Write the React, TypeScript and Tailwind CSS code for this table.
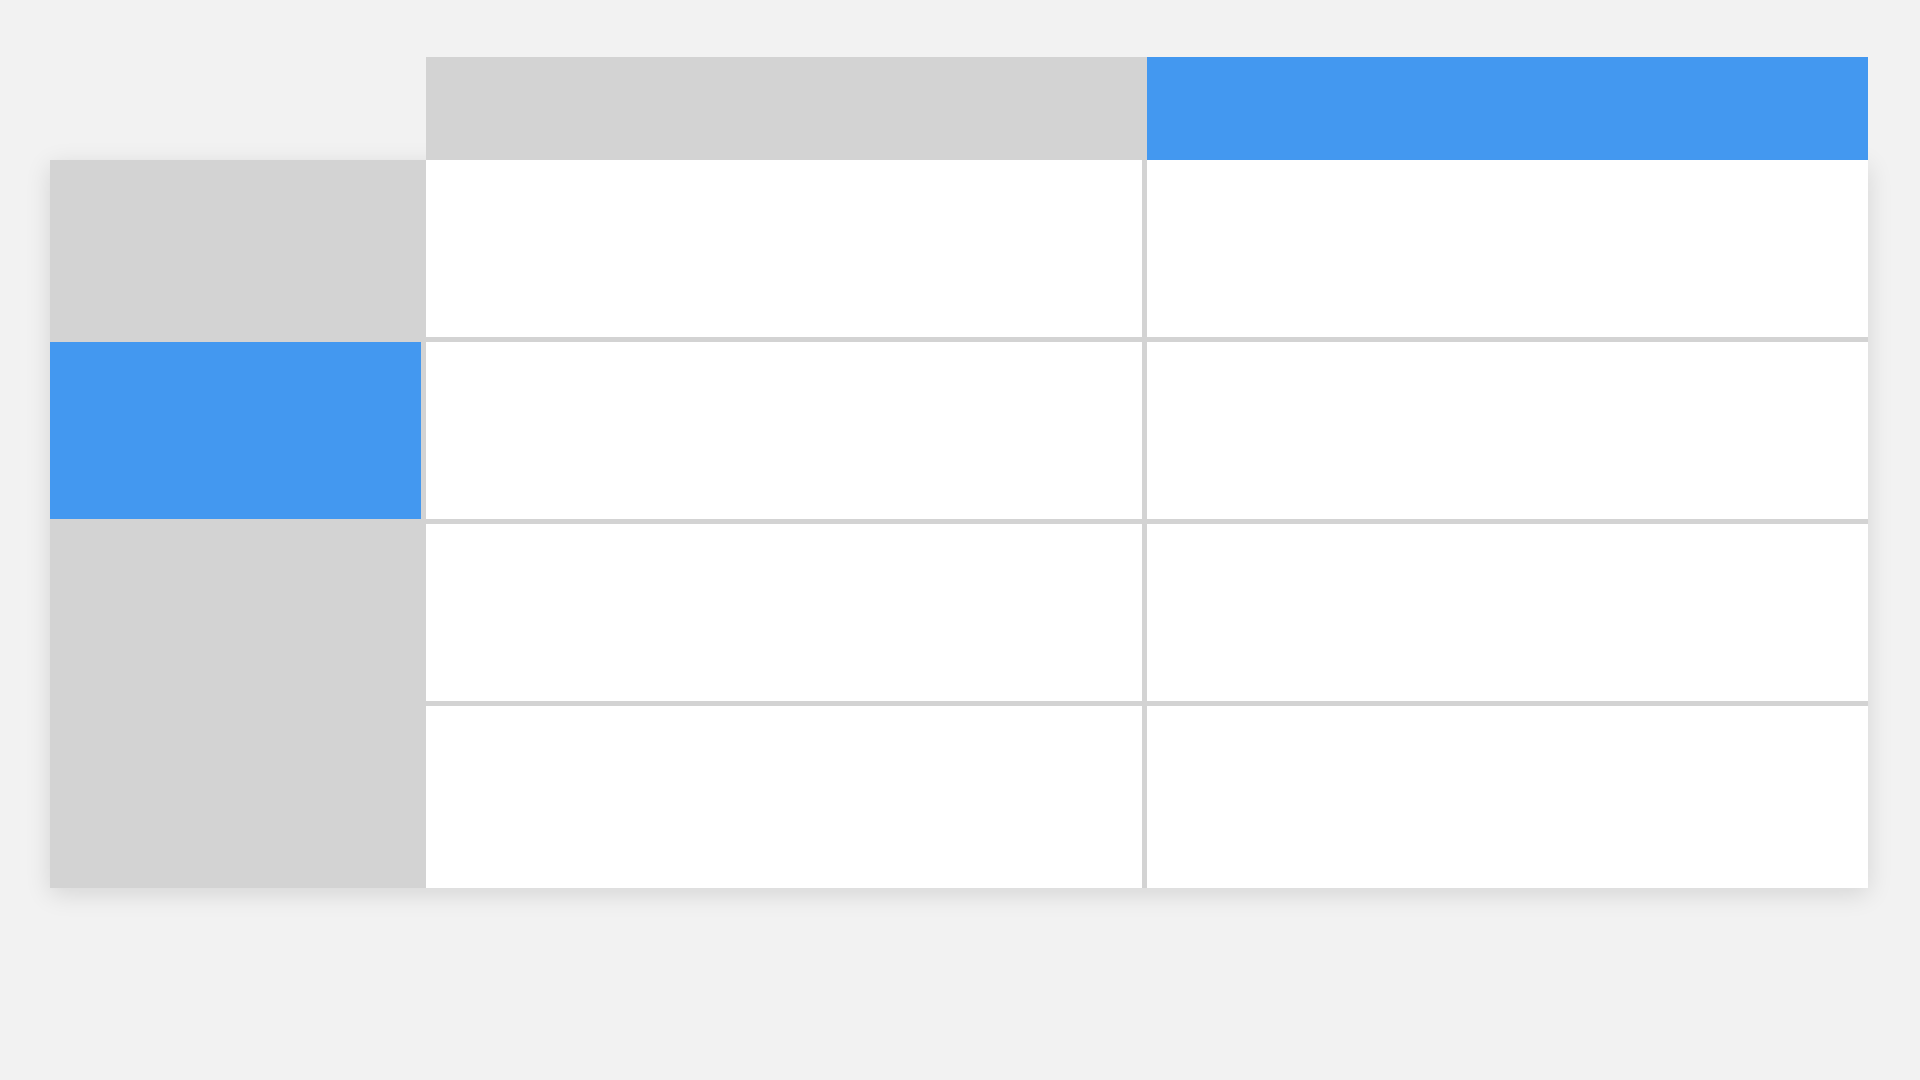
import React from "react";

const rows = [0, 1, 2, 3];

export default function App() {
  return (
    <div className="min-h-screen w-full bg-[#f2f2f2] pt-[57px] pl-[50px] font-['Liberation_Sans',sans-serif]">
      <div className="w-[1818px]">
        <div className="flex h-[103px]">
          <div className="w-[376px]" />
          <div className="w-[721px] bg-[#d3d3d3]" />
          <div className="w-[721px] bg-[#4398f0]" />
        </div>
        <div className="flex shadow-[0_6px_24px_rgba(0,0,0,0.12)]">
          <div className="flex w-[376px] flex-col bg-[#d3d3d3]">
            {rows.map((r) => (
              <div
                key={r}
                className={
                  r === 1
                    ? "h-[182px] border-r-[5px] border-b-[5px] border-[#d3d3d3] bg-[#4398f0]"
                    : "h-[182px] bg-[#d3d3d3]"
                }
              />
            ))}
          </div>
          <div className="flex w-[721px] flex-col">
            {rows.map((r) => (
              <div
                key={r}
                className={
                  r < 3
                    ? "h-[182px] border-r-[5px] border-b-[5px] border-[#d3d3d3] bg-white"
                    : "h-[182px] border-r-[5px] border-[#d3d3d3] bg-white"
                }
              />
            ))}
          </div>
          <div className="flex w-[721px] flex-col">
            {rows.map((r) => (
              <div
                key={r}
                className={
                  r < 3
                    ? "h-[182px] border-b-[5px] border-[#d3d3d3] bg-white"
                    : "h-[182px] bg-white"
                }
              />
            ))}
          </div>
        </div>
      </div>
    </div>
  );
}
